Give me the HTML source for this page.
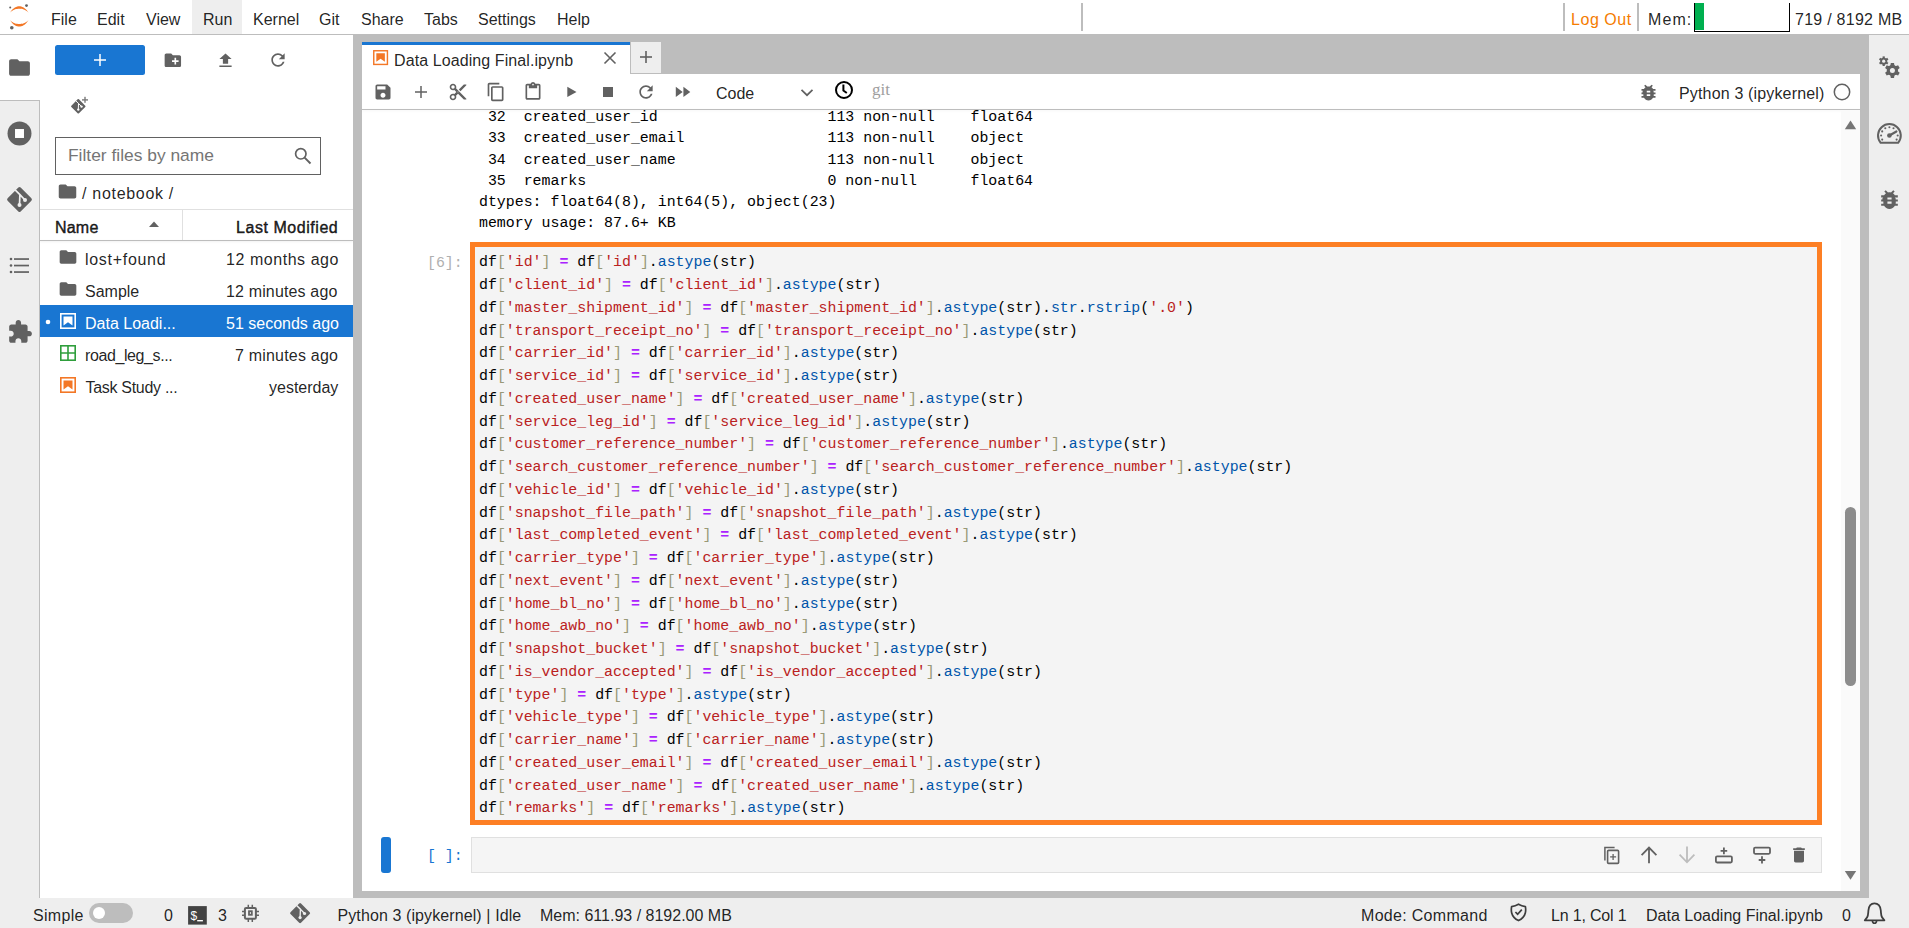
<!DOCTYPE html>
<html><head><meta charset="utf-8">
<style>
*{box-sizing:border-box;margin:0;padding:0}
html,body{width:1909px;height:928px;overflow:hidden;background:#fff;font-family:"Liberation Sans",sans-serif;color:rgba(0,0,0,0.87)}
.a{position:absolute}
.t{position:absolute;white-space:nowrap;font-size:16px;line-height:20px;padding-top:2px}
svg{position:absolute;overflow:visible}
.mono{font-family:"Liberation Mono",monospace}
/* code */
.code{position:absolute;left:479px;top:251.4px;font-family:"Liberation Mono",monospace;font-size:14.9px;line-height:22.75px;white-space:pre;color:#000}
.code .b{color:#997}
.code .s{color:#ba2121}
.code .o{color:#aa22ff;font-weight:bold}
.code .p{color:#0055aa}
.out{position:absolute;left:479px;font-family:"Liberation Mono",monospace;font-size:14.9px;line-height:21.25px;white-space:pre;color:#000}
</style></head><body>

<!-- menu bar -->
<div class="a" style="left:0;top:0;width:1909px;height:34px;background:#fff"></div>
<div class="a" style="left:0;top:34px;width:1909px;height:1px;background:#bdbdbd"></div>
<div class="a" style="left:192px;top:0;width:50px;height:34px;background:#eeeeee"></div>
<div class="t" style="left:51px;top:8px">File</div>
<div class="t" style="left:97px;top:8px">Edit</div>
<div class="t" style="left:146px;top:8px">View</div>
<div class="t" style="left:203px;top:8px">Run</div>
<div class="t" style="left:253px;top:8px">Kernel</div>
<div class="t" style="left:319px;top:8px">Git</div>
<div class="t" style="left:361px;top:8px">Share</div>
<div class="t" style="left:424px;top:8px">Tabs</div>
<div class="t" style="left:478px;top:8px">Settings</div>
<div class="t" style="left:557px;top:8px">Help</div>
<div class="a" style="left:1081px;top:3px;width:2px;height:28px;background:#bdbdbd"></div>
<div class="a" style="left:1563px;top:3px;width:2px;height:28px;background:#bdbdbd"></div>
<div class="t" style="left:1571px;top:8px;color:#f57c00;letter-spacing:0.55px">Log Out</div>
<div class="a" style="left:1637px;top:3px;width:2px;height:28px;background:#bdbdbd"></div>
<div class="t" style="left:1648px;top:8px;letter-spacing:1.1px">Mem:</div>
<div class="a" style="left:1694px;top:3px;width:96px;height:28.5px;border:1.25px solid #000;border-top:none"></div>
<div class="a" style="left:1694.5px;top:3px;width:9.5px;height:27.2px;background:#00b050"></div>
<div class="t" style="left:1795px;top:8px;letter-spacing:0.26px">719 / 8192 MB</div>

<!-- left activity bar -->
<div class="a" style="left:0;top:35px;width:40px;height:863px;background:#eeeeee"></div>
<div class="a" style="left:0;top:35px;width:40px;height:65px;background:#fff"></div>
<div class="a" style="left:0;top:100px;width:39px;height:1px;background:#bdbdbd"></div>
<div class="a" style="left:39px;top:100px;width:1px;height:798px;background:#bdbdbd"></div>

<!-- file browser -->
<div class="a" style="left:40px;top:35px;width:313px;height:863px;background:#fff"></div>
<div class="a" style="left:55px;top:45px;width:90px;height:30px;background:#1976d2;border-radius:2.5px"></div>
<div class="a" style="left:55px;top:137px;width:266px;height:38px;border:1.5px solid #616161"></div>
<div class="t" style="left:68px;top:143px;font-size:17.4px;color:#757575">Filter files by name</div>
<div class="t" style="left:82px;top:182px;letter-spacing:0.7px">/ notebook /</div>
<div class="a" style="left:40px;top:209px;width:313px;height:1px;background:#e0e0e0"></div>
<div class="a" style="left:182px;top:210px;width:1px;height:30px;background:#e0e0e0"></div>
<div class="a" style="left:40px;top:240px;width:313px;height:1px;background:#bdbdbd;box-shadow:0 1px 2px rgba(0,0,0,0.08)"></div>
<div class="t" style="left:55px;top:216px;-webkit-text-stroke:0.45px rgba(0,0,0,0.87);letter-spacing:0.2px">Name</div>
<div class="t" style="left:236px;top:216px;-webkit-text-stroke:0.45px rgba(0,0,0,0.87);letter-spacing:0.55px">Last Modified</div>
<div class="a" style="left:40px;top:305px;width:313px;height:32px;background:#1976d2"></div>
<div class="t" style="left:85px;top:248px;letter-spacing:0.7px">lost+found</div>
<div class="t" style="left:226px;top:248px;letter-spacing:0.55px">12 months ago</div>
<div class="t" style="left:85px;top:280px">Sample</div>
<div class="t" style="left:226px;top:280px;letter-spacing:0.15px">12 minutes ago</div>
<div class="t" style="left:85px;top:312px;color:#fff">Data Loadi...</div>
<div class="t" style="left:226px;top:312px;color:#fff">51 seconds ago</div>
<div class="t" style="left:85px;top:344px;letter-spacing:-0.4px">road_leg_s...</div>
<div class="t" style="left:235px;top:344px;letter-spacing:0.2px">7 minutes ago</div>
<div class="t" style="left:85.5px;top:376px;letter-spacing:-0.3px">Task Study ...</div>
<div class="t" style="left:269px;top:376px">yesterday</div>


<!-- ICONS: logo -->
<svg style="left:0;top:0" width="40" height="34" viewBox="0 0 40 34">
<path d="M10 12.8 C13 7.5 17 6.2 19.2 6.2 C21.5 6.2 25.5 7.5 28.6 12.8 C25.5 9.3 22 8.8 19.2 8.8 C16.5 8.8 13 9.3 10 12.8Z" fill="#f37726"/>
<path d="M10 20 C13 25.3 17 26.6 19.2 26.6 C21.5 26.6 25.5 25.3 28.6 20 C25.5 23.5 22 24 19.2 24 C16.5 24 13 23.5 10 20Z" fill="#f37726"/>
<circle cx="10.2" cy="7.6" r="1" fill="#616161"/>
<circle cx="26.5" cy="5.6" r="1.45" fill="#616161"/>
<circle cx="11.8" cy="27.8" r="1.8" fill="#616161"/>
</svg>
<!-- activity bar icons -->
<svg style="left:7px;top:55px" width="25" height="25" viewBox="0 0 24 24"><path fill="#616161" d="M10 4H4c-1.1 0-1.99.9-1.99 2L2 18c0 1.1.9 2 2 2h16c1.1 0 2-.9 2-2V8c0-1.1-.9-2-2-2h-8l-2-2z"/></svg>
<svg style="left:7px;top:121px" width="25" height="25" viewBox="0 0 24 24"><circle cx="12" cy="12" r="11.5" fill="#616161"/><rect x="7.7" y="7.7" width="8.6" height="8.6" fill="#fff"/></svg>
<svg style="left:7px;top:187px" width="25" height="25" viewBox="0 0 25 25"><rect x="3.3" y="3.3" width="18.4" height="18.4" rx="1.6" transform="rotate(45 12.5 12.5)" fill="#616161"/><path d="M7.6 2.4 L12.9 7.6 L12.5 18.1 M12.9 7.6 L18 13" stroke="#eeeeee" stroke-width="1.7" fill="none"/><circle cx="12.5" cy="18.1" r="2" fill="#eeeeee"/><circle cx="18" cy="13" r="2" fill="#eeeeee"/></svg>
<svg style="left:9px;top:257px" width="21" height="16" viewBox="0 0 21 16"><circle cx="2" cy="2" r="1.3" fill="#616161"/><circle cx="2" cy="8.5" r="1.3" fill="#616161"/><circle cx="2" cy="15" r="1.3" fill="#616161"/><rect x="5" y="1.2" width="15" height="1.7" fill="#616161"/><rect x="5" y="7.7" width="15" height="1.7" fill="#616161"/><rect x="5" y="14.2" width="15" height="1.7" fill="#616161"/></svg>
<svg style="left:6.5px;top:318.5px" width="26" height="26" viewBox="0 0 24 24"><path fill="#616161" d="M20.5 11H19V7c0-1.1-.9-2-2-2h-4V3.5C13 2.12 11.88 1 10.5 1S8 2.12 8 3.5V5H4c-1.1 0-1.99.9-1.99 2v3.8H3.5c1.49 0 2.7 1.21 2.7 2.7s-1.21 2.7-2.7 2.7H2V20c0 1.1.9 2 2 2h3.8v-1.5c0-1.490 1.21-2.7 2.7-2.7 1.49 0 2.7 1.21 2.7 2.7V22H17c1.1 0 2-.9 2-2v-4h1.5c1.38 0 2.5-1.12 2.5-2.5S21.88 11 20.5 11z"/></svg>

<!-- file browser toolbar -->
<svg style="left:94px;top:54px" width="12" height="12" viewBox="0 0 12 12"><rect x="0" y="5.25" width="12" height="1.5" fill="#fff"/><rect x="5.25" y="0" width="1.5" height="12" fill="#fff"/></svg>
<svg style="left:163.2px;top:49.6px" width="19.7" height="20.5" viewBox="0 0 24 24" preserveAspectRatio="none"><path fill="#616161" d="M20 6h-8l-2-2H4c-1.1 0-1.99.9-1.99 2L2 18c0 1.1.9 2 2 2h16c1.1 0 2-.9 2-2V8c0-1.1-.9-2-2-2zm-1 8h-3v3h-2v-3h-3v-2h3V9h2v3h3v2z"/></svg>
<svg style="left:214.6px;top:50.6px" width="21" height="19.3" viewBox="0 0 24 24" preserveAspectRatio="none"><path fill="#616161" d="M9 16h6v-6h4l-7-7-7 7h4zm-4 2h14v2H5z"/></svg>
<svg style="left:268px;top:50px" width="20" height="20" viewBox="0 0 24 24"><path fill="#616161" d="M17.65 6.35C16.2 4.9 14.21 4 12 4c-4.42 0-7.99 3.58-7.99 8s3.57 8 7.99 8c3.73 0 6.84-2.55 7.73-6h-2.08c-.82 2.33-3.04 4-5.65 4-3.31 0-6-2.69-6-6s2.69-6 6-6c1.66 0 3.14.69 4.22 1.78L13 11h7V4l-2.35 2.35z"/></svg>
<svg style="left:71px;top:99.3px" width="14.6" height="14.6" viewBox="0 0 25 25"><rect x="3.3" y="3.3" width="18.4" height="18.4" rx="1.6" transform="rotate(45 12.5 12.5)" fill="#616161"/><path d="M7.6 2.4 L12.9 7.6 L12.5 18.1 M12.9 7.6 L18 13" stroke="#ffffff" stroke-width="1.7" fill="none"/><circle cx="12.5" cy="18.1" r="2" fill="#ffffff"/><circle cx="18" cy="13" r="2" fill="#ffffff"/></svg>
<svg style="left:81px;top:96px" width="8" height="8" viewBox="0 0 8 8"><rect x="1" y="3.2" width="6" height="1.4" fill="#7a7a7a"/><rect x="3.3" y="0.8" width="1.4" height="6" fill="#7a7a7a"/></svg>
<!-- search -->
<svg style="left:292px;top:145px" width="22" height="22" viewBox="0 0 22 22"><circle cx="8.8" cy="8.8" r="5.2" stroke="#616161" stroke-width="1.7" fill="none"/><path d="M12.6 12.6 L18.5 18.5" stroke="#616161" stroke-width="1.9"/></svg>
<!-- breadcrumb folder -->
<svg style="left:57px;top:181px" width="21" height="21" viewBox="0 0 24 24"><path fill="#616161" d="M10 4H4c-1.1 0-1.99.9-1.99 2L2 18c0 1.1.9 2 2 2h16c1.1 0 2-.9 2-2V8c0-1.1-.9-2-2-2h-8l-2-2z"/></svg>
<!-- sort caret -->
<svg style="left:148px;top:220px" width="12" height="8" viewBox="0 0 12 8"><path d="M1 7 L6 1.5 L11 7Z" fill="#616161"/></svg>
<!-- file icons -->
<svg style="left:58px;top:247px" width="20" height="20" viewBox="0 0 24 24"><path fill="#616161" d="M10 4H4c-1.1 0-1.99.9-1.99 2L2 18c0 1.1.9 2 2 2h16c1.1 0 2-.9 2-2V8c0-1.1-.9-2-2-2h-8l-2-2z"/></svg>
<svg style="left:58px;top:279px" width="20" height="20" viewBox="0 0 24 24"><path fill="#616161" d="M10 4H4c-1.1 0-1.99.9-1.99 2L2 18c0 1.1.9 2 2 2h16c1.1 0 2-.9 2-2V8c0-1.1-.9-2-2-2h-8l-2-2z"/></svg>
<svg style="left:45px;top:319px" width="6" height="6" viewBox="0 0 6 6"><circle cx="3" cy="3" r="2.3" fill="#fff"/></svg>
<svg style="left:60px;top:313px" width="16" height="16" viewBox="0 0 16 16"><rect x="0.8" y="0.8" width="14.4" height="14.4" fill="none" stroke="#fff" stroke-width="1.6"/><path d="M3.5 3.5 H12.5 V12.5 L8 9.3 L3.5 12.5Z" fill="#fff"/></svg>
<svg style="left:60px;top:345px" width="16" height="16" viewBox="0 0 16 16"><rect x="0.8" y="0.8" width="14.4" height="14.4" fill="none" stroke="#2f9e3c" stroke-width="1.6"/><path d="M8 0.8 V15.2 M0.8 8 H15.2" stroke="#2f9e3c" stroke-width="1.6"/></svg>
<svg style="left:60px;top:377px" width="16" height="16" viewBox="0 0 16 16"><rect x="0.8" y="0.8" width="14.4" height="14.4" fill="none" stroke="#f37726" stroke-width="1.6"/><path d="M3.5 3.5 H12.5 V12.5 L8 9.3 L3.5 12.5Z" fill="#f37726"/></svg>

<!-- splitters -->
<div class="a" style="left:353px;top:35px;width:1516px;height:863px;background:#bdbdbd"></div>

<!-- tab -->
<div class="a" style="left:362px;top:42px;width:268px;height:32px;background:#fff;border-top:3px solid #1976d2"></div>
<div class="t" style="left:394px;top:49px;letter-spacing:0.09px">Data Loading Final.ipynb</div>
<div class="a" style="left:630px;top:42px;width:31px;height:31px;background:#eeeeee;border-left:1px solid #bdbdbd"></div>

<!-- notebook panel -->
<div class="a" style="left:362px;top:74px;width:1498px;height:817px;background:#fff"></div>
<div class="a" style="left:362px;top:109px;width:1498px;height:1px;background:#bdbdbd;box-shadow:0 1px 3px rgba(0,0,0,0.07)"></div>
<div class="t" style="left:716px;top:82px">Code</div>
<div class="t" style="left:1679px;top:82px;letter-spacing:0.16px">Python 3 (ipykernel)</div>

<!-- scrollbar -->
<div class="a" style="left:1841px;top:110px;width:19px;height:781px;background:#fafafa"></div>
<div class="a" style="left:1845px;top:507px;width:11px;height:179px;background:#8c8c8c;border-radius:6px"></div>

<!-- right sidebar bg -->
<div class="a" style="left:1869px;top:35px;width:40px;height:863px;background:#eeeeee"></div>

<!-- status bar -->
<div class="a" style="left:0;top:898px;width:1909px;height:30px;background:#eeeeee"></div>
<div class="t" style="left:33px;top:904px;letter-spacing:0.3px">Simple</div>
<div class="t" style="left:164px;top:904px">0</div>
<div class="t" style="left:218px;top:904px">3</div>
<div class="t" style="left:337.5px;top:904px;letter-spacing:0.1px">Python 3 (ipykernel) | Idle</div>
<div class="t" style="left:540px;top:904px">Mem: 611.93 / 8192.00 MB</div>
<div class="t" style="left:1361px;top:904px;letter-spacing:0.3px">Mode: Command</div>
<div class="t" style="left:1551px;top:904px;letter-spacing:-0.18px">Ln 1, Col 1</div>
<div class="t" style="left:1646px;top:904px">Data Loading Final.ipynb</div>
<div class="t" style="left:1842px;top:904px">0</div>

<!-- tab icons -->
<svg style="left:373px;top:50px" width="15.2" height="15.2" viewBox="0 0 16 16"><rect x="0.8" y="0.8" width="14.4" height="14.4" fill="none" stroke="#f37726" stroke-width="1.5"/><path d="M3.5 3.5 H12.5 V12.5 L8 9.3 L3.5 12.5Z" fill="#f37726"/></svg>
<svg style="left:603px;top:51px" width="14" height="14" viewBox="0 0 14 14"><path d="M1.5 1.5 L12.5 12.5 M12.5 1.5 L1.5 12.5" stroke="#616161" stroke-width="1.6"/></svg>
<svg style="left:639px;top:50px" width="14" height="14" viewBox="0 0 14 14"><rect x="1" y="6.2" width="12" height="1.6" fill="#616161"/><rect x="6.2" y="1" width="1.6" height="12" fill="#616161"/></svg>

<!-- notebook toolbar -->
<svg style="left:373px;top:82px" width="20" height="20" viewBox="0 0 24 24"><path fill="#616161" d="M17 3H5c-1.11 0-2 .9-2 2v14c0 1.1.89 2 2 2h14c1.1 0 2-.9 2-2V7l-4-4zm-5 16c-1.66 0-3-1.34-3-3s1.34-3 3-3 3 1.34 3 3-1.34 3-3 3zm3-10H5V5h10v4z"/></svg>
<svg style="left:414px;top:85px" width="14" height="14" viewBox="0 0 14 14"><rect x="1" y="6.25" width="12" height="1.5" fill="#616161"/><rect x="6.25" y="1" width="1.5" height="12" fill="#616161"/></svg>
<svg style="left:448px;top:82px" width="20" height="20" viewBox="0 0 24 24"><path fill="#616161" d="M9.64 7.64c.23-.5.36-1.05.36-1.64 0-2.21-1.79-4-4-4S2 3.79 2 6s1.79 4 4 4c.59 0 1.14-.13 1.64-.36L10 12l-2.36 2.36C7.14 14.13 6.59 14 6 14c-2.21 0-4 1.79-4 4s1.79 4 4 4 4-1.79 4-4c0-.59-.13-1.14-.36-1.64L12 14l7 7h3v-1L9.64 7.64zM6 8c-1.1 0-2-.89-2-2s.9-2 2-2 2 .89 2 2-.9 2-2 2zm0 12c-1.1 0-2-.89-2-2s.9-2 2-2 2 .89 2 2-.9 2-2 2zm6-7.5c-.28 0-.5-.22-.5-.5s.22-.5.5-.5.5.22.5.5-.22.5-.5.5zM19 3l-6 6 2 2 7-7V3z"/></svg>
<svg style="left:486px;top:82px" width="20" height="20" viewBox="0 0 24 24"><path fill="#616161" d="M16 1H4c-1.1 0-2 .9-2 2v14h2V3h12V1zm3 4H8c-1.1 0-2 .9-2 2v14c0 1.1.9 2 2 2h11c1.1 0 2-.9 2-2V7c0-1.1-.9-2-2-2zm0 16H8V7h11v14z"/></svg>
<svg style="left:523px;top:81.1px" width="20" height="21.5" viewBox="0 0 24 24" preserveAspectRatio="none"><path fill="#616161" d="M19 3h-4.18C14.4 1.84 13.3 1 12 1c-1.3 0-2.4.84-2.82 2H5c-1.1 0-2 .9-2 2v14c0 1.1.9 2 2 2h14c1.1 0 2-.9 2-2V5c0-1.1-.9-2-2-2zm-7 0c.55 0 1 .45 1 1s-.45 1-1 1-1-.45-1-1 .45-1 1-1zm7 16H5V5h2v3h10V5h2v14z"/></svg>
<svg style="left:566px;top:86px" width="12" height="12" viewBox="0 0 12 12"><path d="M1.3 0.7 L10.5 5.9 L1.3 11.1Z" fill="#616161"/></svg>
<svg style="left:603px;top:87px" width="10" height="10" viewBox="0 0 10 10"><rect x="0" y="0" width="10" height="10" fill="#616161"/></svg>
<svg style="left:636px;top:82px" width="20" height="20" viewBox="0 0 24 24"><path fill="#616161" d="M17.65 6.35C16.2 4.9 14.21 4 12 4c-4.42 0-7.99 3.58-7.99 8s3.57 8 7.99 8c3.73 0 6.84-2.55 7.73-6h-2.08c-.82 2.33-3.04 4-5.65 4-3.31 0-6-2.69-6-6s2.69-6 6-6c1.66 0 3.14.69 4.22 1.78L13 11h7V4l-2.35 2.35z"/></svg>
<svg style="left:675px;top:86px" width="16" height="12" viewBox="0 0 16 12"><path d="M0.8 0.7 L7.7 5.9 L0.8 11.1Z M8.4 0.7 L15.3 5.9 L8.4 11.1Z" fill="#616161"/></svg>
<svg style="left:799px;top:87px" width="16" height="12" viewBox="0 0 16 12"><path d="M2.5 2.8 L8 8.2 L13.5 2.8" stroke="#616161" stroke-width="1.7" fill="none"/></svg>
<svg style="left:834px;top:80px" width="20" height="20" viewBox="0 0 20 20"><circle cx="10" cy="10" r="8" stroke="#000" stroke-width="2" fill="none"/><path d="M9.4 4.6 V10.6 L12.8 13" stroke="#000" stroke-width="2" fill="none"/></svg>
<div class="t" style="left:872px;top:78px;font-family:'Liberation Serif',serif;font-size:17px;color:#9e9e9e">git</div>
<svg style="left:1638.3px;top:82px" width="21" height="21" viewBox="0 0 24 24"><path fill="#616161" d="M20 8h-2.81c-.45-.78-1.07-1.45-1.82-1.96L17 4.41 15.59 3l-2.17 2.17C12.96 5.06 12.49 5 12 5c-.49 0-.96.06-1.41.17L8.41 3 7 4.41l1.62 1.63C7.88 6.55 7.26 7.22 6.81 8H4v2h2.09c-.5.12-.9.55-.9 1.08V12H4v2h2.09v1c0 .5.04.75.09 1H4v2h2.81c1.04 1.79 2.97 3 5.19 3s4.15-1.21 5.19-3H20v-2h-2.09c.05-.25.09-.5.09-1v-1H20v-2h-2.09v-.92c0-.53-.4-.96-.91-1.08H20V8zm-6 8h-4v-2h4v2zm0-4h-4v-2h4v2z"/></svg>
<svg style="left:1832px;top:82px" width="20" height="20" viewBox="0 0 20 20"><circle cx="10" cy="10" r="7.7" stroke="#616161" stroke-width="1.5" fill="none"/></svg>
<!-- scroll arrows -->
<svg style="left:1844px;top:119px" width="13" height="11" viewBox="0 0 13 11"><path d="M0.8 10.2 L6.5 1.5 L12.2 10.2Z" fill="#757575"/></svg>
<svg style="left:1844px;top:870px" width="13" height="11" viewBox="0 0 13 11"><path d="M0.8 1 L6.5 9.7 L12.2 1Z" fill="#757575"/></svg>

<!-- right sidebar -->
<svg style="left:1872px;top:50px" width="34" height="34" viewBox="0 0 34 34">
<g transform="translate(11.7,11.2)" fill="#616161"><circle r="3.5"/><rect x="-1.1" y="-4.8" width="2.2" height="9.6"/><rect x="-1.1" y="-4.8" width="2.2" height="9.6" transform="rotate(60)"/><rect x="-1.1" y="-4.8" width="2.2" height="9.6" transform="rotate(120)"/><circle r="1.6" fill="#eeeeee"/></g>
<g transform="translate(20.4,20.4)" fill="#616161"><circle r="5.6"/><path d="M-1.6 -7.5 H1.6 L2.2 -4 H-2.2Z"/><path d="M-1.6 -7.5 H1.6 L2.2 -4 H-2.2Z" transform="rotate(60)"/><path d="M-1.6 -7.5 H1.6 L2.2 -4 H-2.2Z" transform="rotate(120)"/><path d="M-1.6 -7.5 H1.6 L2.2 -4 H-2.2Z" transform="rotate(180)"/><path d="M-1.6 -7.5 H1.6 L2.2 -4 H-2.2Z" transform="rotate(240)"/><path d="M-1.6 -7.5 H1.6 L2.2 -4 H-2.2Z" transform="rotate(300)"/><circle r="2.5" fill="#eeeeee"/></g>
</svg>
<svg style="left:1872px;top:116px" width="34" height="34" viewBox="0 0 34 34">
<path d="M8.64 26.8 A11.4 11.4 0 1 1 26.16 26.8 Z" fill="none" stroke="#616161" stroke-width="2" stroke-linejoin="round"/>
<path d="M17.4 19.5 L24.4 15.5" stroke="#616161" stroke-width="2.2" stroke-linecap="round"/><circle cx="17.4" cy="19.5" r="2.3" fill="#616161"/>
<g fill="#616161"><circle cx="17.4" cy="11.2" r="1.05"/><circle cx="13.3" cy="12.3" r="1.05"/><circle cx="21.5" cy="12.3" r="1.05"/><circle cx="10.2" cy="15.4" r="1.05"/><circle cx="9.1" cy="19.5" r="1.05"/><circle cx="25.7" cy="19.5" r="1.05"/><circle cx="10.2" cy="23.6" r="1.05"/><circle cx="24.6" cy="23.6" r="1.05"/></g>
</svg>
<svg style="left:1877px;top:187px" width="25" height="25" viewBox="0 0 24 24"><path fill="#616161" d="M20 8h-2.81c-.45-.78-1.07-1.45-1.82-1.96L17 4.41 15.59 3l-2.17 2.17C12.96 5.06 12.490 5 12 5c-.49 0-.96.06-1.41.17L8.41 3 7 4.41l1.62 1.63C7.88 6.55 7.26 7.22 6.81 8H4v2h2.09c-.5.12-.9.55-.9 1.08V12H4v2h2.09v1c0 .5.04.75.09 1H4v2h2.81c1.04 1.79 2.97 3 5.19 3s4.15-1.21 5.19-3H20v-2h-2.09c.05-.25.09-.5.09-1v-1H20v-2h-2.09v-.92c0-.53-.4-.96-.91-1.08H20V8zm-6 8h-4v-2h4v2zm0-4h-4v-2h4v2z"/></svg>

<!-- status bar icons -->
<div class="a" style="left:89px;top:903px;width:44px;height:20px;background:#bdbdbd;border-radius:10px"></div>
<div class="a" style="left:93px;top:907px;width:12px;height:12px;background:#fff;border-radius:6px"></div>
<svg style="left:184px;top:900px" width="80" height="28" viewBox="0 0 80 28">
<rect x="4.1" y="6.1" width="18.7" height="18.5" fill="#424242"/>
<text x="6.6" y="20" font-family="Liberation Sans" font-size="12" fill="#fff">$</text>
<rect x="13.2" y="20" width="5.7" height="1.4" fill="#fff"/>
<rect x="60.9" y="7.9" width="11" height="10.8" rx="1.2" fill="none" stroke="#616161" stroke-width="2"/>
<rect x="65" y="11.2" width="2.8" height="3.6" fill="none" stroke="#616161" stroke-width="1.8"/>
<g stroke="#616161" stroke-width="1.5"><path d="M64.3 4.8 V8 M68.3 4.8 V8 M64.3 18.6 V21.9 M68.3 18.6 V21.9 M58 11.4 H61 M58 15.2 H61 M71.8 11.4 H75 M71.8 15.2 H75"/></g>
</svg>
<svg style="left:290px;top:903px" width="20.2" height="20.2" viewBox="0 0 25 25"><rect x="3.3" y="3.3" width="18.4" height="18.4" rx="1.6" transform="rotate(45 12.5 12.5)" fill="#616161"/><path d="M7.6 2.4 L12.9 7.6 L12.5 18.1 M12.9 7.6 L18 13" stroke="#eeeeee" stroke-width="1.7" fill="none"/><circle cx="12.5" cy="18.1" r="2" fill="#eeeeee"/><circle cx="18" cy="13" r="2" fill="#eeeeee"/></svg>
<svg style="left:1508px;top:902px" width="21" height="21" viewBox="0 0 21 21"><path d="M10.5 2.2 C12.5 3.4 14.6 4.2 17.4 4.6 C17.8 7 17.8 9.2 17.3 11 C16.4 14.6 14 17 10.5 18.6 C7 17 4.6 14.6 3.7 11 C3.2 9.2 3.2 7 3.6 4.6 C6.4 4.2 8.5 3.4 10.5 2.2Z" fill="none" stroke="#3d3d3d" stroke-width="1.7" stroke-linejoin="round"/><path d="M7.4 10 L9.6 12.2 L13.8 7.6" stroke="#3d3d3d" stroke-width="1.7" fill="none"/></svg>
<svg style="left:1855px;top:898px" width="40" height="30" viewBox="0 0 40 30"><path d="M19.4 5.4 C15.6 5.4 13.8 8.4 13.4 12.5 C13.1 15.6 13.3 17.6 12.1 19.4 L9.8 22.3 H29.4 L27.1 19.4 C25.9 17.6 26.1 15.6 25.8 12.5 C25.4 8.4 23.2 5.4 19.4 5.4Z" fill="none" stroke="#3d3d3d" stroke-width="1.8" stroke-linejoin="round"/><path d="M17.4 22.6 C17.5 24.5 18.4 25.2 19.5 25.2 C20.6 25.2 21.5 24.5 21.6 22.6" fill="none" stroke="#3d3d3d" stroke-width="1.6"/></svg>

<!-- OUTPUT -->
<div class="out" style="top:107px;clip-path:inset(3px 0 0 0)"> 32  created_user_id                   113 non-null    float64
 33  created_user_email                113 non-null    object
 34  created_user_name                 113 non-null    object
 35  remarks                           0 non-null      float64
dtypes: float64(8), int64(5), object(23)
memory usage: 87.6+ KB</div>

<!-- CELL -->
<div class="a" style="left:470px;top:242px;width:1352px;height:583px;border:5px solid #fd7f24;background:#f4f4f4"></div>
<div class="t mono" style="left:427px;top:251px;font-size:14.9px;color:#b0b0b0">[6]:</div>

<div class="code">df<span class=b>[</span><span class=s>'id'</span><span class=b>]</span> <span class=o>=</span> df<span class=b>[</span><span class=s>'id'</span><span class=b>]</span>.<span class=p>astype</span>(str)
df<span class=b>[</span><span class=s>'client_id'</span><span class=b>]</span> <span class=o>=</span> df<span class=b>[</span><span class=s>'client_id'</span><span class=b>]</span>.<span class=p>astype</span>(str)
df<span class=b>[</span><span class=s>'master_shipment_id'</span><span class=b>]</span> <span class=o>=</span> df<span class=b>[</span><span class=s>'master_shipment_id'</span><span class=b>]</span>.<span class=p>astype</span>(str).<span class=p>str</span>.<span class=p>rstrip</span>(<span class=s>'.0'</span>)
df<span class=b>[</span><span class=s>'transport_receipt_no'</span><span class=b>]</span> <span class=o>=</span> df<span class=b>[</span><span class=s>'transport_receipt_no'</span><span class=b>]</span>.<span class=p>astype</span>(str)
df<span class=b>[</span><span class=s>'carrier_id'</span><span class=b>]</span> <span class=o>=</span> df<span class=b>[</span><span class=s>'carrier_id'</span><span class=b>]</span>.<span class=p>astype</span>(str)
df<span class=b>[</span><span class=s>'service_id'</span><span class=b>]</span> <span class=o>=</span> df<span class=b>[</span><span class=s>'service_id'</span><span class=b>]</span>.<span class=p>astype</span>(str)
df<span class=b>[</span><span class=s>'created_user_name'</span><span class=b>]</span> <span class=o>=</span> df<span class=b>[</span><span class=s>'created_user_name'</span><span class=b>]</span>.<span class=p>astype</span>(str)
df<span class=b>[</span><span class=s>'service_leg_id'</span><span class=b>]</span> <span class=o>=</span> df<span class=b>[</span><span class=s>'service_leg_id'</span><span class=b>]</span>.<span class=p>astype</span>(str)
df<span class=b>[</span><span class=s>'customer_reference_number'</span><span class=b>]</span> <span class=o>=</span> df<span class=b>[</span><span class=s>'customer_reference_number'</span><span class=b>]</span>.<span class=p>astype</span>(str)
df<span class=b>[</span><span class=s>'search_customer_reference_number'</span><span class=b>]</span> <span class=o>=</span> df<span class=b>[</span><span class=s>'search_customer_reference_number'</span><span class=b>]</span>.<span class=p>astype</span>(str)
df<span class=b>[</span><span class=s>'vehicle_id'</span><span class=b>]</span> <span class=o>=</span> df<span class=b>[</span><span class=s>'vehicle_id'</span><span class=b>]</span>.<span class=p>astype</span>(str)
df<span class=b>[</span><span class=s>'snapshot_file_path'</span><span class=b>]</span> <span class=o>=</span> df<span class=b>[</span><span class=s>'snapshot_file_path'</span><span class=b>]</span>.<span class=p>astype</span>(str)
df<span class=b>[</span><span class=s>'last_completed_event'</span><span class=b>]</span> <span class=o>=</span> df<span class=b>[</span><span class=s>'last_completed_event'</span><span class=b>]</span>.<span class=p>astype</span>(str)
df<span class=b>[</span><span class=s>'carrier_type'</span><span class=b>]</span> <span class=o>=</span> df<span class=b>[</span><span class=s>'carrier_type'</span><span class=b>]</span>.<span class=p>astype</span>(str)
df<span class=b>[</span><span class=s>'next_event'</span><span class=b>]</span> <span class=o>=</span> df<span class=b>[</span><span class=s>'next_event'</span><span class=b>]</span>.<span class=p>astype</span>(str)
df<span class=b>[</span><span class=s>'home_bl_no'</span><span class=b>]</span> <span class=o>=</span> df<span class=b>[</span><span class=s>'home_bl_no'</span><span class=b>]</span>.<span class=p>astype</span>(str)
df<span class=b>[</span><span class=s>'home_awb_no'</span><span class=b>]</span> <span class=o>=</span> df<span class=b>[</span><span class=s>'home_awb_no'</span><span class=b>]</span>.<span class=p>astype</span>(str)
df<span class=b>[</span><span class=s>'snapshot_bucket'</span><span class=b>]</span> <span class=o>=</span> df<span class=b>[</span><span class=s>'snapshot_bucket'</span><span class=b>]</span>.<span class=p>astype</span>(str)
df<span class=b>[</span><span class=s>'is_vendor_accepted'</span><span class=b>]</span> <span class=o>=</span> df<span class=b>[</span><span class=s>'is_vendor_accepted'</span><span class=b>]</span>.<span class=p>astype</span>(str)
df<span class=b>[</span><span class=s>'type'</span><span class=b>]</span> <span class=o>=</span> df<span class=b>[</span><span class=s>'type'</span><span class=b>]</span>.<span class=p>astype</span>(str)
df<span class=b>[</span><span class=s>'vehicle_type'</span><span class=b>]</span> <span class=o>=</span> df<span class=b>[</span><span class=s>'vehicle_type'</span><span class=b>]</span>.<span class=p>astype</span>(str)
df<span class=b>[</span><span class=s>'carrier_name'</span><span class=b>]</span> <span class=o>=</span> df<span class=b>[</span><span class=s>'carrier_name'</span><span class=b>]</span>.<span class=p>astype</span>(str)
df<span class=b>[</span><span class=s>'created_user_email'</span><span class=b>]</span> <span class=o>=</span> df<span class=b>[</span><span class=s>'created_user_email'</span><span class=b>]</span>.<span class=p>astype</span>(str)
df<span class=b>[</span><span class=s>'created_user_name'</span><span class=b>]</span> <span class=o>=</span> df<span class=b>[</span><span class=s>'created_user_name'</span><span class=b>]</span>.<span class=p>astype</span>(str)
df<span class=b>[</span><span class=s>'remarks'</span><span class=b>]</span> <span class=o>=</span> df<span class=b>[</span><span class=s>'remarks'</span><span class=b>]</span>.<span class=p>astype</span>(str)</div>

<!-- empty cell -->
<div class="a" style="left:381px;top:837px;width:10px;height:36px;background:#1976d2;border-radius:3px"></div>
<div class="t mono" style="left:427px;top:844px;font-size:14.9px;color:#1976d2">[ ]:</div>
<div class="a" style="left:471px;top:837px;width:1351px;height:36px;background:#f5f5f5;border:1px solid #e0e0e0"></div>

<!-- cell toolbar -->
<svg style="left:1602px;top:845px" width="20" height="20" viewBox="0 0 20 20"><path d="M2.9 15.6 V2.6 H12.6" stroke="#616161" stroke-width="1.5" fill="none"/><rect x="5.6" y="5.4" width="11" height="13" rx="1" stroke="#616161" stroke-width="1.6" fill="none"/><path d="M11.1 8.9 V14.9 M8.1 11.9 H14.1" stroke="#616161" stroke-width="1.3"/></svg>
<svg style="left:1639px;top:845px" width="20" height="20" viewBox="0 0 20 20"><path d="M10 18.3 V3 M2.6 10.2 L10 2.6 L17.4 10.2" stroke="#616161" stroke-width="1.8" fill="none"/></svg>
<svg style="left:1677px;top:845px" width="20" height="20" viewBox="0 0 20 20"><path d="M10 1.6 V16.9 M2.6 9.7 L10 17.3 L17.4 9.7" stroke="#bdbdbd" stroke-width="1.8" fill="none"/></svg>
<svg style="left:1714px;top:845px" width="20" height="20" viewBox="0 0 20 20"><rect x="1.9" y="11.3" width="16" height="6.2" rx="1.2" stroke="#616161" stroke-width="1.8" fill="none"/><path d="M9.9 2.6 V9.2 M6.6 5.9 H13.2" stroke="#616161" stroke-width="1.8"/></svg>
<svg style="left:1752px;top:845px" width="20" height="20" viewBox="0 0 20 20"><rect x="2" y="2.6" width="16" height="6.2" rx="1.2" stroke="#616161" stroke-width="1.8" fill="none"/><path d="M10 11.3 V18.5 M6.7 15 H13.3" stroke="#616161" stroke-width="1.8"/></svg>
<svg style="left:1789px;top:845px" width="20" height="20" viewBox="0 0 24 24"><path fill="#616161" d="M6 19c0 1.1.9 2 2 2h8c1.1 0 2-.9 2-2V7H6v12zM19 4h-3.5l-1-1h-5l-1 1H5v2h14V4z"/></svg>

</body></html>
